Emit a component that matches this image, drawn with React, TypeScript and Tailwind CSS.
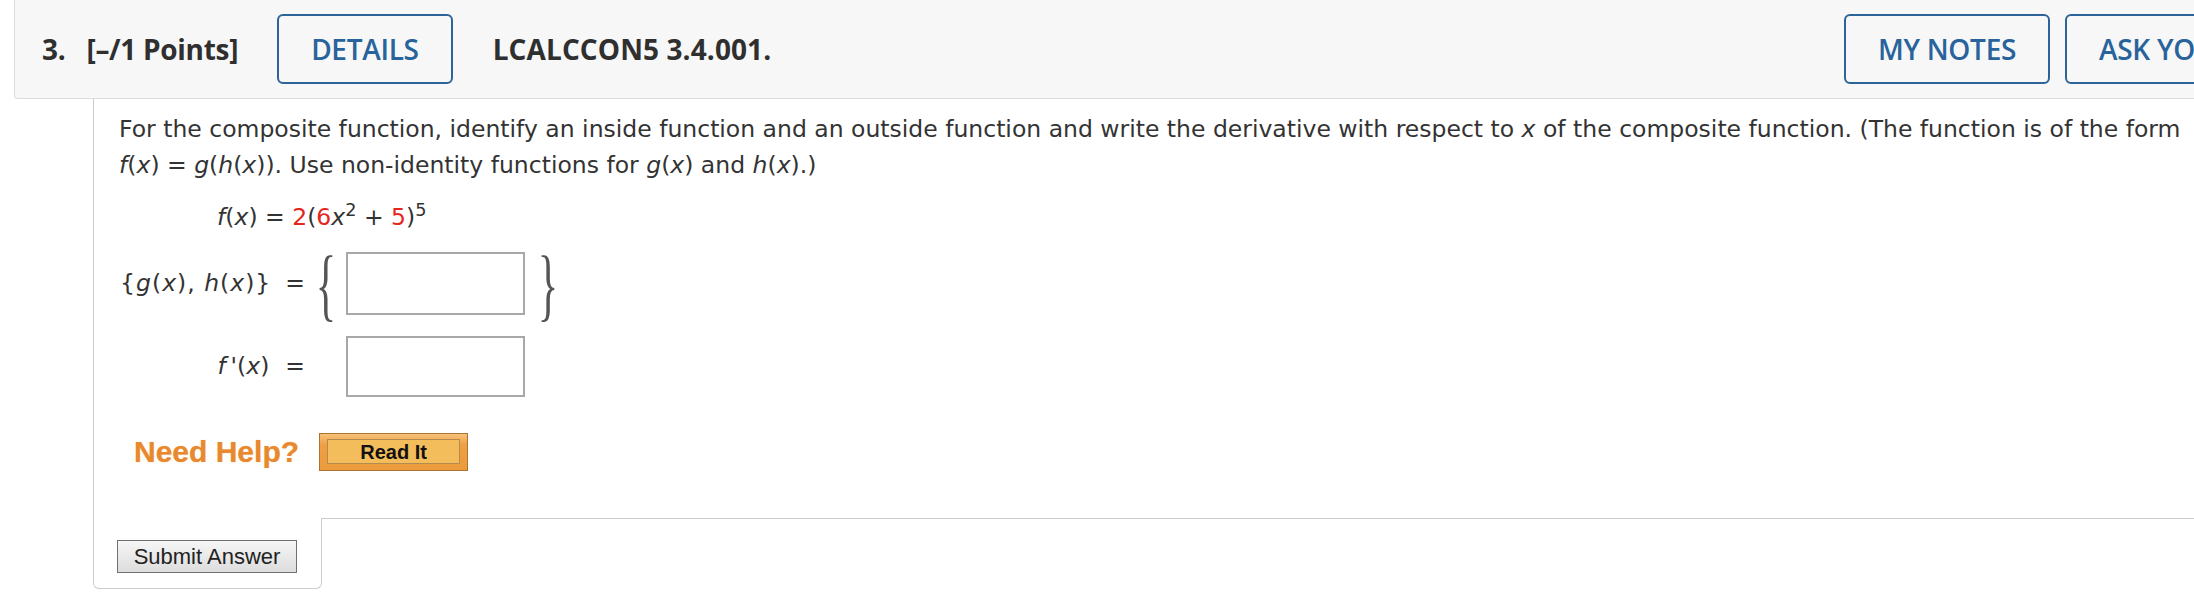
import React from "react";

const red = "text-[#e5261e]";

function HeaderButton({ children }: { children: React.ReactNode }) {
  return (
    <div className="flex-none h-[70px] px-[32px] border-2 border-[#2c6399] rounded-[6px] flex items-center text-[#28639b] text-[28px] font-semibold tracking-[-0.3px] whitespace-nowrap">
      {children}
    </div>
  );
}

export default function App() {
  return (
    <div className="w-[2194px] h-[592px] overflow-hidden bg-white relative">
      {/* Header */}
      <div
        className="ml-[14px] w-[2400px] h-[99px] bg-[#f7f7f7] border-l border-b border-[#dcdcdc] rounded-bl-[4px] flex items-center text-[#2f2f2f]"
        style={{ fontFamily: '"Open Sans", "Liberation Sans", sans-serif' }}
      >
        <div className="w-[1829px] flex-none flex items-center pl-[27px]">
          <span className="text-[28px] font-bold tracking-[-0.3px]">3.</span>
          <span className="ml-[21px] text-[28px] font-bold tracking-[-0.3px] whitespace-nowrap">[–/1 Points]</span>
          <div className="ml-[39px]">
            <HeaderButton>DETAILS</HeaderButton>
          </div>
          <span className="ml-[40px] text-[28px] font-bold tracking-[0.1px] whitespace-nowrap">LCALCCON5 3.4.001.</span>
        </div>
        <div className="flex items-center gap-[15px]">
          <HeaderButton>MY NOTES</HeaderButton>
          <HeaderButton>ASK YOUR TEACHER</HeaderButton>
        </div>
      </div>

      {/* Question area */}
      <div
        className="ml-[93px] w-[2200px] border-l border-[#cccccc] pt-[12px] pl-[25px] pb-[47px] text-[#333333] text-[23.5px]"
        style={{ fontFamily: 'Verdana, "DejaVu Sans", sans-serif' }}
      >
        <div className="leading-[36px] whitespace-nowrap">
          For the composite function, identify an inside function and an outside function and write the derivative with respect to <i>x</i> of the composite function. (The function is of the form
        </div>
        <div className="leading-[36px] whitespace-nowrap">
          <i>f</i>(<i>x</i>) = <i>g</i>(<i>h</i>(<i>x</i>)). Use non-identity functions for <i>g</i>(<i>x</i>) and <i>h</i>(<i>x</i>).)
        </div>

        <div className="mt-[16px] ml-[98px] leading-[36px] whitespace-nowrap">
          <i>f</i>(<i>x</i>) = <span className={red}>2</span>(<span className={red}>6</span>
          <i>x</i>
          <sup>2</sup> + <span className={red}>5</span>)<sup>5</sup>
        </div>

        {/* Row 1 */}
        <div className="mt-[17px] flex items-center">
          <div className="w-[186px] text-right whitespace-nowrap">
            <span className="tracking-[1px]">
              {"{"}
              <i>g</i>(<i>x</i>), <i>h</i>(<i>x</i>){"}"}
            </span>
            <span className="ml-[14px]">=</span>
          </div>
          <div className="w-[41px] flex justify-center">
            <span
              className="inline-block text-[50px] leading-[50px] scale-y-[1.6] scale-x-[0.85] text-[#555555] font-light"
              style={{ fontFamily: '"Liberation Serif", serif' }}
            >
              {"{"}
            </span>
          </div>
          <div className="w-[179px] h-[63px] border-2 border-[#a8a8a8] bg-white" />
          <div className="w-[46px] flex justify-center">
            <span
              className="inline-block text-[50px] leading-[50px] scale-y-[1.6] scale-x-[0.85] text-[#555555] font-light"
              style={{ fontFamily: '"Liberation Serif", serif' }}
            >
              {"}"}
            </span>
          </div>
        </div>

        {/* Row 2 */}
        <div className="mt-[21px] flex items-center">
          <div className="w-[186px] text-right whitespace-nowrap">
            <i>f</i>&thinsp;<i>'</i>(<i>x</i>)<span className="ml-[16px]">=</span>
          </div>
          <div className="w-[41px]" />
          <div className="w-[179px] h-[61px] border-2 border-[#a8a8a8] bg-white" />
        </div>

        {/* Need help */}
        <div className="mt-[36px] ml-[15px] flex items-center" style={{ fontFamily: '"Liberation Sans", Arial, sans-serif' }}>
          <span className="text-[30px] font-bold text-[#e8892f] leading-[38px] [text-shadow:0_0_1px_#f2b47a]">Need Help?</span>
          <div className="ml-[20px] w-[149px] h-[38px] border border-[#a8742f] bg-[linear-gradient(#f6c27a,#eea044_30%,#ec9a3c)] px-[7px] pt-[5px] pb-[6px]">
            <div className="w-full h-full border border-[#b58a50] bg-[#f4bd5c] flex items-center justify-center text-[20px] font-bold text-[#111111] leading-none">
              Read It
            </div>
          </div>
        </div>
      </div>

      {/* Bottom row */}
      <div className="ml-[93px] flex">
        <div className="flex-none w-[229px] h-[71px] border-l border-r border-b border-[#cccccc] rounded-b-[6px] pt-[22px] pl-[23px]">
          <div
            className="w-[180px] h-[33px] border border-[#707070] bg-[linear-gradient(#f6f6f6,#dddddd)] flex items-center justify-center text-[22px] text-[#222222] leading-none"
            style={{ fontFamily: '"Liberation Sans", Arial, sans-serif' }}
          >
            Submit Answer
          </div>
        </div>
        <div className="flex-1 border-t border-[#cccccc]" />
      </div>
    </div>
  );
}
